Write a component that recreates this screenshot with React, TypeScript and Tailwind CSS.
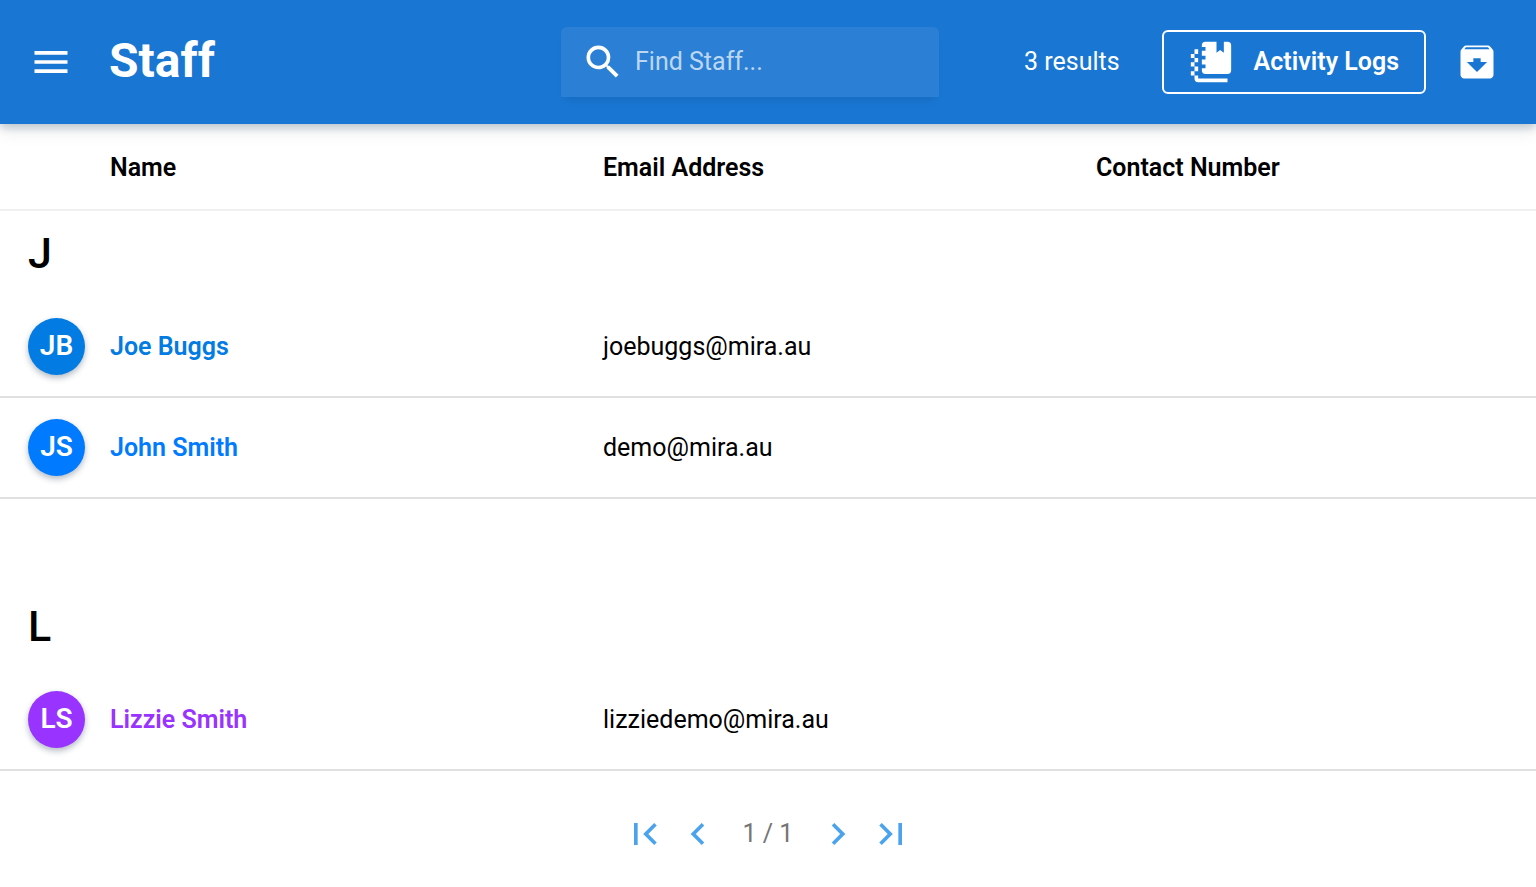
import { useState } from "react";
import {
  MdArchive,
  MdChevronLeft,
  MdChevronRight,
  MdFirstPage,
  MdLastPage,
  MdMenu,
  MdSearch,
} from "react-icons/md";

type StaffMember = {
  name: string;
  initials: string;
  email: string;
  phone?: string;
  avatarClass: string;
  nameClass: string;
};

type StaffGroup = {
  letter: string;
  members: StaffMember[];
};

const groups: StaffGroup[] = [
  {
    letter: "J",
    members: [
      {
        name: "Joe Buggs",
        initials: "JB",
        email: "joebuggs@mira.au",
        avatarClass: "bg-[#027be3]",
        nameClass: "text-[#027be3]",
      },
      {
        name: "John Smith",
        initials: "JS",
        email: "demo@mira.au",
        avatarClass: "bg-[#007bff]",
        nameClass: "text-[#007bff]",
      },
    ],
  },
  {
    letter: "L",
    members: [
      {
        name: "Lizzie Smith",
        initials: "LS",
        email: "lizziedemo@mira.au",
        avatarClass: "bg-[#9933ff]",
        nameClass: "text-[#9933ff]",
      },
    ],
  },
];

const NotebooksIcon = () => (
  <svg viewBox="0 0 24 24" className="size-11" fill="currentColor" aria-hidden="true">
    <path d="M9 1h6v6l2-1.5L19 7V1h2a2 2 0 0 1 2 2v13.5a2 2 0 0 1-2 2H9a2 2 0 0 1-2-2v-1.1h2v-2H7v-2.8h2v-2H7V5.8h2v-2H7V3a2 2 0 0 1 2-2z" />
    <path d="M3 5h2v2.6H3zM1 7.6h2v2.2H1zM3 9.8h2v2.4H3zM1 12.2h2v2.3H1zM3 14.5h2V17H3zM1 17h2v2.3H1zM3 19.3h2V21h16v2H5a2 2 0 0 1-2-2z" />
  </svg>
);

const Header = ({ total }: { total: number }) => {
  const [query, setQuery] = useState("");

  return (
    <header className="relative flex h-[124px] items-center bg-[#1976d2] pr-[37px] pl-[29px] text-white shadow-[0_4px_8px_rgba(0,40,70,0.2),0_8px_16px_rgba(0,40,70,0.08)]">
      <div className="flex flex-[19] items-center">
        <button type="button" aria-label="Open menu">
          <MdMenu className="size-11" />
        </button>
        <h1 className="ml-9 pb-0.5 text-5xl font-bold">Staff</h1>
      </div>

      <label className="flex h-[70px] w-[378px] items-center rounded-t-md bg-white/8 pl-5 shadow-[0_6px_8px_-4px_rgba(0,0,0,0.1)]">
        <MdSearch className="size-11 shrink-0" />
        <input
          type="text"
          aria-label="Find staff"
          placeholder="Find Staff..."
          value={query}
          onChange={e => setQuery(e.target.value)}
          className="ml-2.5 w-full min-w-0 bg-transparent text-[25px] outline-none placeholder:text-white/70"
        />
      </label>

      <div className="flex flex-[20] items-center justify-end">
        <span className="text-[25px]">{total} results</span>
        <button
          type="button"
          className="ml-[42px] flex h-16 items-center gap-[21px] rounded-md border-2 border-white pr-[25px] pl-[25px] text-[25px] font-semibold"
        >
          <NotebooksIcon />
          <span>Activity Logs</span>
        </button>
        <button type="button" aria-label="Archive" className="ml-[29px]">
          <MdArchive className="size-11" />
        </button>
      </div>
    </header>
  );
};

const StaffRow = ({ member }: { member: StaffMember }) => (
  <tr className="h-[101px]">
    <td className="border-b-2 border-[#e0e0e0] pl-7">
      <div
        className={`flex size-[57px] items-center justify-center rounded-full pb-0.5 text-[28px] font-semibold text-white shadow-[0_3px_6px_rgba(0,30,60,0.3)] ${member.avatarClass}`}
      >
        {member.initials}
      </div>
    </td>
    <td className="border-b-2 border-[#e0e0e0] pl-[53px]">
      <a href="#" className={`font-semibold ${member.nameClass}`}>
        {member.name}
      </a>
    </td>
    <td className="border-b-2 border-[#e0e0e0] pl-[53px]">{member.email}</td>
    <td className="border-b-2 border-[#e0e0e0] pl-[53px]">{member.phone}</td>
  </tr>
);

const Pagination = ({ page, pages }: { page: number; pages: number }) => (
  <nav aria-label="Pagination" className="flex items-center justify-center pt-[41px] text-[#4ba3ee]">
    <button type="button" aria-label="First page">
      <MdFirstPage className="size-11" />
    </button>
    <button type="button" aria-label="Previous page" className="ml-[9px]">
      <MdChevronLeft className="size-11" />
    </button>
    <span className="mx-[23px] text-[25px] text-[#757575]">
      {page} / {pages}
    </span>
    <button type="button" aria-label="Next page">
      <MdChevronRight className="size-11" />
    </button>
    <button type="button" aria-label="Last page" className="ml-[9px]">
      <MdLastPage className="size-11" />
    </button>
  </nav>
);

export default function App() {
  const total = groups.reduce((sum, group) => sum + group.members.length, 0);

  return (
    <div className="min-h-screen bg-white font-['Roboto','Liberation_Sans',sans-serif] text-black">
      <Header total={total} />
      <table className="w-full table-fixed border-separate border-spacing-0 text-left text-[25px]">
        <thead>
          <tr className="h-[87px]">
            <td className="w-[57px] border-b-2 border-[#f0f0f0]" />
            <th className="border-b-2 border-[#f0f0f0] pt-0.5 pl-[53px] font-semibold">Name</th>
            <th className="border-b-2 border-[#f0f0f0] pt-0.5 pl-[53px] font-semibold">Email Address</th>
            <th className="border-b-2 border-[#f0f0f0] pt-0.5 pl-[53px] font-semibold">Contact Number</th>
          </tr>
        </thead>
        {groups.map((group, i) => (
          <tbody key={group.letter}>
            {i > 0 && <tr className="h-[85px]" aria-hidden="true" />}
            <tr className="h-[86px]">
              <th colSpan={4} scope="rowgroup" className="pb-0.5 pl-7 text-[43px] leading-none font-medium">
                {group.letter}
              </th>
            </tr>
            {group.members.map(member => (
              <StaffRow key={member.email} member={member} />
            ))}
          </tbody>
        ))}
      </table>
      <Pagination page={1} pages={1} />
    </div>
  );
}
